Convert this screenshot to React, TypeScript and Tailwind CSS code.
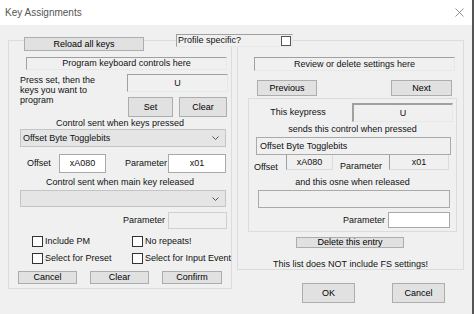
import React from "react";

const btn =
  "flex items-center justify-center bg-[#e1e1e1] border border-[#adadad] text-black leading-none whitespace-nowrap";
const sunken =
  "border border-t-[#a0a0a0] border-l-[#a0a0a0] border-b-[#e8e8e8] border-r-[#e8e8e8]";
const deep =
  "border-t-2 border-l-2 border-b border-r border-t-[#a0a0a0] border-l-[#a0a0a0] border-b-[#e8e8e8] border-r-[#e8e8e8]";
const whiteBox = "flex items-center justify-center bg-white border border-[#a9a9a9] leading-none";
const line = "h-[10px] leading-[10px] w-full text-center whitespace-nowrap";

function Chevron() {
  return (
    <svg width="7" height="4" viewBox="0 0 7 4" className="mr-[6px]">
      <polyline points="0.5,0.5 3.5,3.5 6.5,0.5" fill="none" stroke="#555" strokeWidth="1" />
    </svg>
  );
}

function Check({ label, w }: { label: string; w?: string }) {
  return (
    <div className={"flex items-center gap-[2px] " + (w ?? "")}>
      <span className="w-[11px] h-[11px] bg-white border border-[#333] shrink-0" />
      <span className="leading-none whitespace-nowrap">{label}</span>
    </div>
  );
}

function Dropdown({ value, cls }: { value?: string; cls: string }) {
  return (
    <div
      className={
        "flex items-center justify-between bg-[#e5e5e5] border border-[#c4c4c4] pl-[2px] " + cls
      }
    >
      <span className="leading-none">{value ?? ""}</span>
      <Chevron />
    </div>
  );
}

function LeftGroup() {
  return (
    <div className="ml-[8px] w-[224px] h-[249px] border border-[#dcdcdc] flex flex-col">
      <div className={sunken + " ml-[17px] mt-[16px] w-[201px] h-[13px] flex items-center justify-center leading-none"}>
        Program keyboard controls here
      </div>

      <div className="flex mt-[4px] ml-[11px]">
        <div className="w-[107px] mt-[1px] leading-[10px]">
          Press set, then the
          <br />
          keys you want to
          <br />
          program
        </div>
        <div className="flex flex-col">
          <div className={sunken + " w-[101px] h-[18px] flex items-center justify-center leading-none"}>U</div>
          <div className="flex mt-[5px]">
            <div className={btn + " ml-[1px] w-[45px] h-[20px]"}>Set</div>
            <div className={btn + " ml-[6px] w-[48px] h-[20px]"}>Clear</div>
          </div>
        </div>
      </div>

      <div className={line + " mt-[1px]"}>Control sent when keys pressed</div>
      <Dropdown value="Offset Byte Togglebits" cls="mt-[1px] ml-[11px] w-[206px] h-[18px]" />

      <div className="flex items-center mt-[7px] h-[19px]">
        <span className="ml-[18px] w-[32px] leading-none">Offset</span>
        <div className={whiteBox + " w-[47px] h-[19px]"}>xA080</div>
        <span className="ml-[19px] w-[43px] leading-none">Parameter</span>
        <div className={whiteBox + " w-[58px] h-[19px]"}>x01</div>
      </div>

      <div className={line + " mt-[4px]"}>Control sent when main key released</div>
      <Dropdown cls="mt-[3px] ml-[11px] w-[206px] h-[17px]" />

      <div className="flex items-center mt-[5px] h-[17px]">
        <span className="ml-[114px] w-[45px] leading-none">Parameter</span>
        <div className="w-[59px] h-[17px] bg-[#f0f0f0] border border-[#cfcfcf]" />
      </div>

      <div className="flex mt-[7px] ml-[23px] h-[11px]">
        <Check label="Include PM" w="w-[100px]" />
        <Check label="No repeats!" />
      </div>
      <div className="flex mt-[6px] ml-[23px] h-[11px]">
        <Check label="Select for Preset" w="w-[100px]" />
        <Check label="Select for Input Event" />
      </div>

      <div className="flex mt-[7px]">
        <div className={btn + " ml-[9px] w-[59px] h-[13px]"}>Cancel</div>
        <div className={btn + " ml-[13px] w-[59px] h-[13px]"}>Clear</div>
        <div className={btn + " ml-[13px] w-[60px] h-[13px]"}>Confirm</div>
      </div>
    </div>
  );
}

function RightColumn() {
  return (
    <div className="ml-[5px] w-[227px] flex flex-col">
      <div className="h-[230px] border border-[#dcdcdc] flex flex-col">
        <div className={sunken + " ml-[16px] mt-[16px] w-[201px] h-[14px] flex items-center justify-center leading-none"}>
          Review or delete settings here
        </div>

        <div className="flex mt-[9px]">
          <div className={btn + " ml-[19px] w-[60px] h-[16px]"}>Previous</div>
          <div className={btn + " ml-[74px] w-[61px] h-[16px]"}>Next</div>
        </div>

        <div className="ml-[10px] mt-[2px] w-[209px] h-[134px] border border-[#dcdcdc] flex flex-col">
          <div className="flex items-center mt-[4px] h-[19px]">
            <span className="w-[98px] text-center leading-none">This keypress</span>
            <div className={deep + " ml-[5px] w-[101px] h-[19px] flex items-center justify-center leading-none"}>U</div>
          </div>

          <div className={line + " mt-[2px]"}>sends this control when pressed</div>
          <div className="ml-[7px] mt-[3px] w-[195px] h-[18px] border border-[#a9a9a9] flex items-center pl-[3px] leading-none">
            Offset Byte Togglebits
          </div>

          <div className="flex items-start h-[15px]">
            <span className="ml-[5px] w-[32px] mt-[8px] leading-none">Offset</span>
            <div className="w-[47px] h-[15px] border-l border-r border-b border-l-[#a0a0a0] border-r-[#dcdcdc] border-b-[#dcdcdc] flex justify-center pt-[3px] leading-none">
              xA080
            </div>
            <span className="w-[56px] mt-[7px] text-center leading-none">Parameter</span>
            <div className="w-[60px] h-[15px] border-l border-r border-b border-l-[#a0a0a0] border-r-[#dcdcdc] border-b-[#dcdcdc] flex justify-center pt-[3px] leading-none">
              x01
            </div>
          </div>

          <div className={line + " mt-[7px]"}>and this osne when released</div>
          <div className="ml-[9px] mt-[3px] w-[192px] h-[18px] border border-[#a9a9a9]" />

          <div className="flex items-center mt-[4px] h-[16px]">
            <span className="ml-[94px] w-[45px] leading-none">Parameter</span>
            <div className="w-[62px] h-[16px] bg-white border border-[#a9a9a9]" />
          </div>
        </div>

        <div className={btn + " ml-[58px] mt-[5px] w-[108px] h-[11px]"}>Delete this entry</div>
        <div className={line + " mt-[11px]"}>This list does NOT include FS settings!</div>
      </div>

      <div className="flex mt-[13px]">
        <div className={btn + " ml-[65px] w-[53px] h-[20px]"}>OK</div>
        <div className={btn + " ml-[37px] w-[53px] h-[20px]"}>Cancel</div>
      </div>
    </div>
  );
}

export default function App() {
  return (
    <div className="w-[474px] h-[314px] bg-white flex flex-col overflow-hidden border-r-2 border-r-[#555] font-['Liberation_Sans',Arial,sans-serif] text-[9px] text-[#111]">
      <div className="h-[25px] shrink-0 flex items-center justify-between pl-[5px] pr-[8px]">
        <span className="text-[10px] text-[#555] leading-none">Key Assignments</span>
        <svg width="9" height="9" viewBox="0 0 9 9">
          <path d="M0.5 0.5 L8.5 8.5 M8.5 0.5 L0.5 8.5" stroke="#777" strokeWidth="0.8" />
        </svg>
      </div>

      <div className="flex-1 bg-[#f0f0f0] flex flex-col">
        <div className="relative z-10 flex items-start mt-[9px] h-[17px]">
          <div className={btn + " ml-[24px] mt-[3px] w-[120px] h-[14px]"}>Reload all keys</div>
          <div className={sunken + " ml-[32px] w-[117px] h-[13px] bg-[#f0f0f0] flex items-center justify-between pl-[1px] pr-[1px]"}>
            <span className="leading-none">Profile specific?</span>
            <span className="w-[10px] h-[10px] bg-white border border-[#555]" />
          </div>
        </div>

        <div className="flex items-start -mt-[11px]">
          <LeftGroup />
          <RightColumn />
        </div>
      </div>
    </div>
  );
}
